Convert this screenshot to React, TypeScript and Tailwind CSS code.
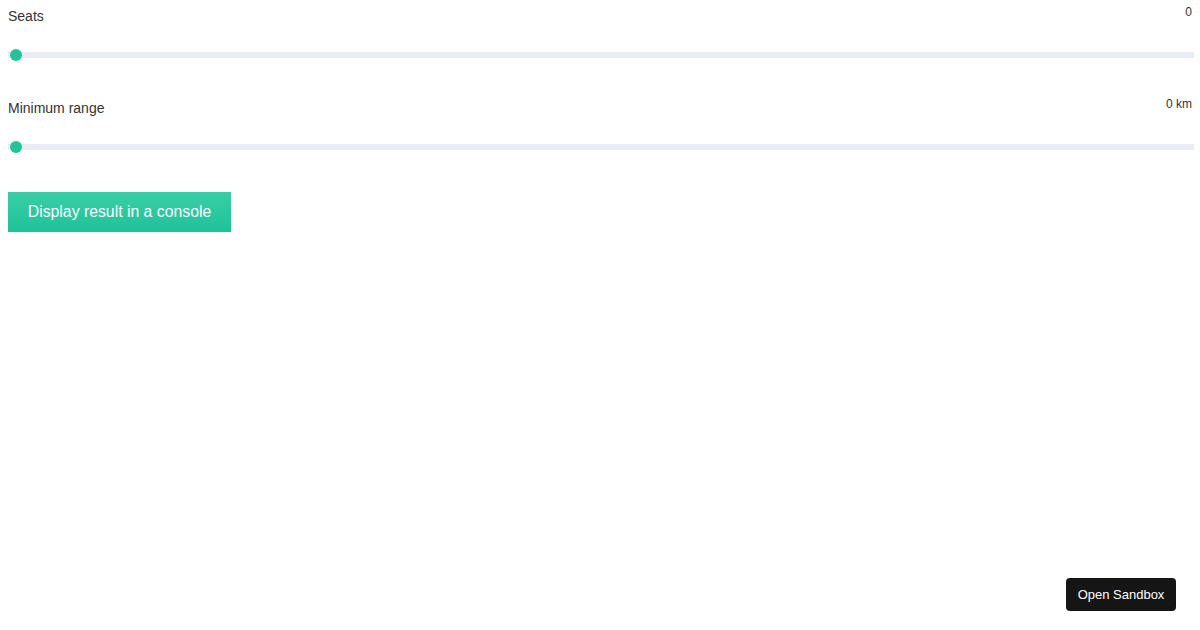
import React from "react";

function SliderRow({ label, value }: { label: string; value: string }) {
  return (
    <div className="flex flex-col">
      <div className="flex justify-between items-start h-[40px]">
        <span className="mt-[4px] text-[14px] leading-[16px] text-[#333333]">{label}</span>
        <span className="text-[12px] leading-[16px] text-[#333333] pr-[2px]">{value}</span>
      </div>
      <div className="relative h-[22px] flex items-center">
        <div className="h-[6px] w-full bg-[#e8edf5]" />
        <div className="absolute left-[2px] top-[5px] w-[12px] h-[12px] rounded-full bg-[#22c59b]" />
      </div>
    </div>
  );
}

export default function App() {
  return (
    <div
      className="min-h-[630px] bg-white pl-[8px] pr-[6px] pt-[4px] relative"
      style={{ fontFamily: '"Liberation Sans", Arial, sans-serif' }}
    >
      <div>
        <SliderRow label="Seats" value="0" />
        <div className="h-[30px]" />
        <SliderRow label="Minimum range" value="0 km" />
      </div>
      <div className="mt-[34px]">
        <button className="w-[223px] h-[40px] text-white text-[15.8px] bg-gradient-to-b from-[#38cea6] to-[#1fc299]">
          Display result in a console
        </button>
      </div>
      <button className="fixed right-[24px] bottom-[19px] w-[110px] h-[33px] rounded-[4px] bg-[#151515] text-white text-[13px]">
        Open Sandbox
      </button>
    </div>
  );
}
